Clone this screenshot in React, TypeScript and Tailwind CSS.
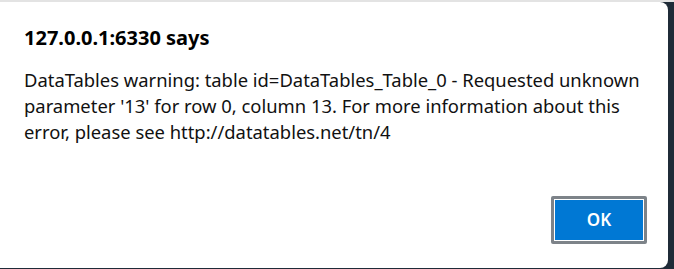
export default function App() {
  return (
    <div
      className="w-[674px] h-[269px] overflow-hidden bg-[#1f2b38]"
      style={{ fontFamily: '"Noto Sans", "Open Sans", sans-serif' }}
    >
      <div className="h-[2px] bg-[#e3e3e3]" />
      <div className="w-[668px] h-[266px] bg-white rounded-r-lg flex flex-col pl-6">
        <h1 className="mt-[23px] text-[20px] font-bold leading-[26px] text-black">
          127.0.0.1:6330 says
        </h1>
        <p className="mt-[16px] w-[636px] text-[18.4px] leading-[26px] text-[#111]">
          DataTables warning: table id=DataTables_Table_0 - Requested unknown
          parameter '13' for row 0, column 13. For more information about this
          error, please see http://datatables.net/tn/4
        </p>
        <div className="mt-[51px] flex justify-end pr-[21px]">
          <button className="w-[96px] h-[48px] rounded-[2px] bg-[#0078d4] border-[3px] border-[#7d8389] outline outline-1 outline-white -outline-offset-[4px] text-white text-[17px] font-semibold">
            OK
          </button>
        </div>
      </div>
    </div>
  );
}
